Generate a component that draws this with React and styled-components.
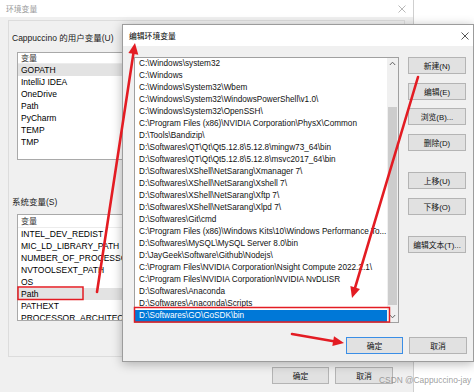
import React from "react";
import styled, { createGlobalStyle } from "styled-components";

const GlobalStyle = createGlobalStyle`
  html, body {
    margin: 0;
    padding: 0;
    background: #ffffff;
  }
  body {
    font-family: "Liberation Sans", "Noto Sans CJK SC", sans-serif;
    font-size: 8.5px;
    color: #000;
  }
`;

const Desktop = styled.div`
  position: relative;
  width: 474px;
  height: 392px;
  overflow: hidden;
  background: #ffffff;
`;

/* ---------- windows ---------- */

const BackWindow = styled.div`
  position: absolute;
  left: 0;
  top: 0;
  width: 414px;
  height: 392px;
  box-sizing: border-box;
  background: #f0f0f0;
  border-right: 1px solid #cfcfcf;
  display: flex;
  flex-direction: column;
`;

const FrontWindow = styled.div`
  position: absolute;
  left: 122px;
  top: 24px;
  width: 352px;
  height: 338px;
  box-sizing: border-box;
  background: #f0f0f0;
  border: 1px solid #9c9c9c;
  box-shadow: 0 2px 10px rgba(0, 0, 0, 0.28);
  display: flex;
  flex-direction: column;
`;

const TitleBar = styled.div`
  flex-shrink: 0;
  height: ${(p) => p.$h}px;
  background: #ffffff;
  display: flex;
  align-items: center;
  justify-content: space-between;
  padding: 0 ${(p) => p.$pr}px 0 ${(p) => p.$pl}px;
  color: ${(p) => (p.$inactive ? "#9a9a9a" : "#000")};
  font-size: 7.8px;
`;

const CloseIcon = ({ color }) => (
  <svg width="8" height="8" viewBox="0 0 8 8">
    <path d="M0.5 0.5 L7.5 7.5 M7.5 0.5 L0.5 7.5" stroke={color} strokeWidth="0.9" />
  </svg>
);

/* ---------- back window body ---------- */

const Panel = styled.div`
  margin: 3px 8px 0 8px;
  height: 337px;
  box-sizing: border-box;
  border: 1px solid #dcdcdc;
  padding: 11px 0 0 3px;
  display: flex;
  flex-direction: column;
  align-items: flex-start;
`;

const GroupLabel = styled.div`
  height: 12px;
  line-height: 12px;
  margin-top: ${(p) => p.$mt || 0}px;
  font-size: 8.5px;
  color: #1a1a1a;
`;

const ListView = styled.div`
  margin: ${(p) => p.$mt}px 0 0 5px;
  width: 360px;
  height: ${(p) => p.$h}px;
  box-sizing: border-box;
  background: #ffffff;
  border: 1px solid #a9a9a9;
  overflow: hidden;
`;

const ListHeader = styled.div`
  height: ${(p) => p.$h}px;
  line-height: ${(p) => p.$h}px;
  padding-left: 3px;
  border-bottom: 1px solid #ececec;
  box-sizing: border-box;
  font-size: 8px;
  color: #333;
`;

const ListRow = styled.div`
  height: 12px;
  line-height: 12px;
  padding-left: 3px;
  white-space: nowrap;
  background: ${(p) => (p.$sel ? "#e3e3e3" : "transparent")};
`;

const Footer = styled.div`
  display: flex;
  justify-content: flex-end;
  gap: 6px;
  margin-top: ${(p) => p.$mt}px;
  padding-right: ${(p) => p.$pr}px;
`;

const Button = styled.div`
  width: ${(p) => p.$w || 58}px;
  height: ${(p) => p.$h || 17}px;
  margin-top: ${(p) => p.$mt || 0}px;
  box-sizing: border-box;
  background: #e1e1e1;
  border: 1px solid ${(p) => (p.$default ? "#3a8ee6" : "#b4b4b4")};
  display: flex;
  align-items: center;
  justify-content: center;
  font-size: 7.8px;
  color: #111;
`;

/* ---------- front window body ---------- */

const EditBody = styled.div`
  flex: 1;
  padding: 11px 6px 0 11px;
  display: flex;
  flex-direction: column;
`;

const EditMain = styled.div`
  display: flex;
  gap: 9px;
`;

const PathList = styled.div`
  width: 265px;
  height: 266px;
  box-sizing: border-box;
  background: #ffffff;
  border: 1px solid #a0a0a0;
  display: flex;
`;

const PathRows = styled.div`
  flex: 1;
  overflow: hidden;
`;

const PathRow = styled.div`
  height: 12px;
  line-height: 12px;
  padding-left: 4px;
  font-size: 8.2px;
  white-space: nowrap;
  overflow: hidden;
  background: ${(p) => (p.$sel ? "#0078d7" : "transparent")};
  color: ${(p) => (p.$sel ? "#fff" : "#111")};
`;

const ScrollBar = styled.div`
  width: 11px;
  background: #f0f0f0;
  display: flex;
  flex-direction: column;
`;

const ScrollArrow = styled.div`
  height: 11px;
  display: flex;
  align-items: center;
  justify-content: center;
`;

const ScrollThumb = styled.div`
  margin: 38px 1px 0 1px;
  height: 198px;
  background: #cdcdcd;
`;

const ScrollTrack = styled.div`
  flex: 1;
`;

const ButtonColumn = styled.div`
  display: flex;
  flex-direction: column;
`;

const Watermark = styled.div`
  position: absolute;
  left: 379px;
  top: 375px;
  font-family: "Liberation Sans", "Noto Sans CJK SC", sans-serif;
  font-size: 8.4px;
  color: rgba(140, 140, 140, 0.85);
  white-space: nowrap;
`;

const Overlay = styled.svg`
  position: absolute;
  left: 0;
  top: 0;
  pointer-events: none;
`;

/* ---------- data ---------- */

const userVars = ["GOPATH", "IntelliJ IDEA", "OneDrive", "Path", "PyCharm", "TEMP", "TMP"];
const sysVars = [
  "INTEL_DEV_REDIST",
  "MIC_LD_LIBRARY_PATH",
  "NUMBER_OF_PROCESSORS",
  "NVTOOLSEXT_PATH",
  "OS",
  "Path",
  "PATHEXT",
  "PROCESSOR_ARCHITECTURE",
];

const paths = [
  "C:\\Windows\\system32",
  "C:\\Windows",
  "C:\\Windows\\System32\\Wbem",
  "C:\\Windows\\System32\\WindowsPowerShell\\v1.0\\",
  "C:\\Windows\\System32\\OpenSSH\\",
  "C:\\Program Files (x86)\\NVIDIA Corporation\\PhysX\\Common",
  "D:\\Tools\\Bandizip\\",
  "D:\\Softwares\\QT\\Qt\\Qt5.12.8\\5.12.8\\mingw73_64\\bin",
  "D:\\Softwares\\QT\\Qt\\Qt5.12.8\\5.12.8\\msvc2017_64\\bin",
  "D:\\Softwares\\XShell\\NetSarang\\Xmanager 7\\",
  "D:\\Softwares\\XShell\\NetSarang\\Xshell 7\\",
  "D:\\Softwares\\XShell\\NetSarang\\Xftp 7\\",
  "D:\\Softwares\\XShell\\NetSarang\\Xlpd 7\\",
  "D:\\Softwares\\Git\\cmd",
  "C:\\Program Files (x86)\\Windows Kits\\10\\Windows Performance To...",
  "D:\\Softwares\\MySQL\\MySQL Server 8.0\\bin",
  "D:\\JayGeek\\Software\\Github\\Nodejs\\",
  "C:\\Program Files\\NVIDIA Corporation\\Nsight Compute 2022.2.1\\",
  "C:\\Program Files\\NVIDIA Corporation\\NVIDIA NvDLISR",
  "D:\\Softwares\\Anaconda",
  "D:\\Softwares\\Anaconda\\Scripts",
  "D:\\Softwares\\GO\\GoSDK\\bin",
];

const sideButtons = [
  { label: "新建(N)", mt: 0 },
  { label: "编辑(E)", mt: 9 },
  { label: "浏览(B)...", mt: 8 },
  { label: "删除(D)", mt: 9 },
  { label: "上移(U)", mt: 21 },
  { label: "下移(O)", mt: 9 },
  { label: "编辑文本(T)...", mt: 21 },
];

const RED = "#e31c23";

function Arrow({ from, to }) {
  const dx = to[0] - from[0];
  const dy = to[1] - from[1];
  const len = Math.hypot(dx, dy);
  const ux = dx / len;
  const uy = dy / len;
  const bx = to[0] - ux * 11;
  const by = to[1] - uy * 11;
  const nx = -uy * 5;
  const ny = ux * 5;
  return (
    <g>
      <line x1={from[0]} y1={from[1]} x2={bx + ux * 2} y2={by + uy * 2} stroke={RED} strokeWidth="2.6" strokeLinecap="round" />
      <polygon points={`${to[0]},${to[1]} ${bx + nx},${by + ny} ${bx - nx},${by - ny}`} fill={RED} />
    </g>
  );
}

export default function App() {
  return (
    <>
      <GlobalStyle />
      <Desktop>
        <BackWindow>
          <TitleBar $h={17} $pl={6} $pr={7} $inactive>
            <span>环境变量</span>
            <CloseIcon color="#b0b0b0" />
          </TitleBar>
          <Panel>
            <GroupLabel>Cappuccino 的用户变量(U)</GroupLabel>
            <ListView $mt={8} $h={108}>
              <ListHeader $h={11}>变量</ListHeader>
              {userVars.map((v, i) => (
                <ListRow key={v} $sel={i === 0}>
                  {v}
                </ListRow>
              ))}
            </ListView>
            <GroupLabel $mt={36}>系统变量(S)</GroupLabel>
            <ListView $mt={6} $h={107}>
              <ListHeader $h={13}>变量</ListHeader>
              {sysVars.map((v) => (
                <ListRow key={v} $sel={v === "Path"}>
                  {v}
                </ListRow>
              ))}
            </ListView>
          </Panel>
          <Footer $mt={10} $pr={20}>
            <Button $w={57}>确定</Button>
            <Button $w={58}>取消</Button>
          </Footer>
        </BackWindow>

        <FrontWindow>
          <TitleBar $h={21} $pl={6} $pr={4}>
            <span>编辑环境变量</span>
            <CloseIcon color="#444" />
          </TitleBar>
          <EditBody>
            <EditMain>
              <PathList>
                <PathRows>
                  {paths.map((p, i) => (
                    <PathRow key={p} $sel={i === paths.length - 1}>
                      {p}
                    </PathRow>
                  ))}
                </PathRows>
                <ScrollBar>
                  <ScrollArrow>
                    <svg width="7" height="5" viewBox="0 0 7 5">
                      <path d="M0.8 4 L3.5 1.2 L6.2 4" fill="none" stroke="#606060" strokeWidth="1" />
                    </svg>
                  </ScrollArrow>
                  <ScrollThumb />
                  <ScrollTrack />
                  <ScrollArrow>
                    <svg width="7" height="5" viewBox="0 0 7 5">
                      <path d="M0.8 1 L3.5 3.8 L6.2 1" fill="none" stroke="#606060" strokeWidth="1" />
                    </svg>
                  </ScrollArrow>
                </ScrollBar>
              </PathList>
              <ButtonColumn>
                {sideButtons.map((b) => (
                  <Button key={b.label} $mt={b.mt}>
                    {b.label}
                  </Button>
                ))}
              </ButtonColumn>
            </EditMain>
            <Footer $mt={14} $pr={0}>
              <Button $w={57} $h={17} $default>
                确定
              </Button>
              <Button $w={58} $h={17}>
                取消
              </Button>
            </Footer>
          </EditBody>
        </FrontWindow>

        <Watermark>CSDN @Cappuccino-jay</Watermark>

        <Overlay width="474" height="392" viewBox="0 0 474 392">
          <rect x="18" y="287" width="65" height="12.5" fill="none" stroke={RED} strokeWidth="1.5" />
          <rect x="134.5" y="307.5" width="255" height="14.5" fill="none" stroke={RED} strokeWidth="1.5" />
          <Arrow from={[97, 292]} to={[135, 43]} />
          <Arrow from={[418, 77]} to={[352, 298]} />
          <Arrow from={[292, 334]} to={[344, 343]} />
        </Overlay>
      </Desktop>
    </>
  );
}
